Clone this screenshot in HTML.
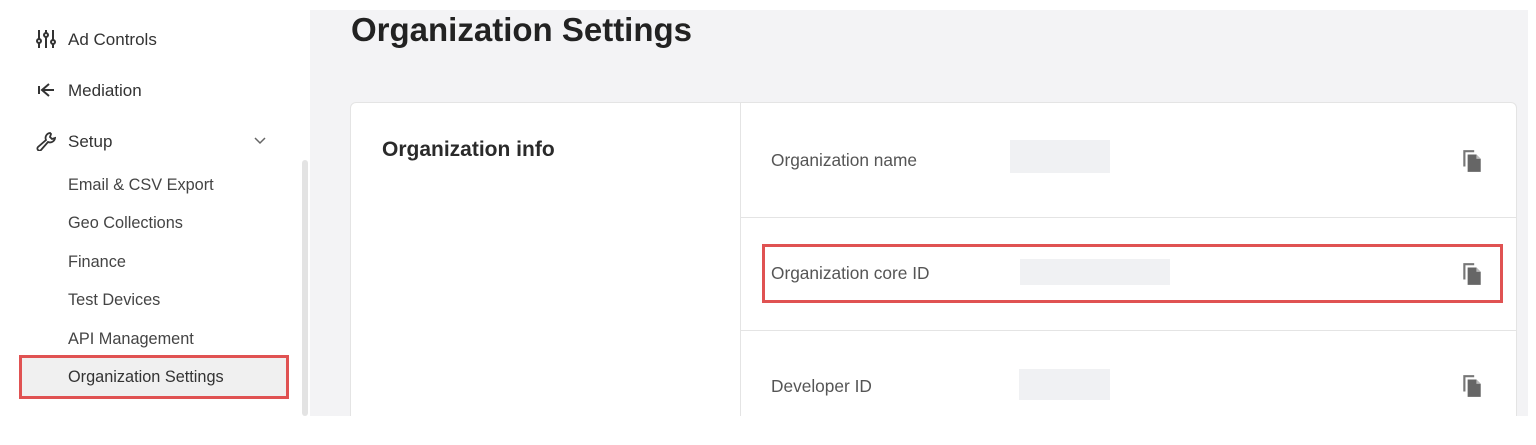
<!DOCTYPE html>
<html><head><style>
*{margin:0;padding:0;box-sizing:border-box}
body{width:1536px;height:445px;background:#fff;position:relative;overflow:hidden;font-family:"Liberation Sans",sans-serif;color:#2a2a2a}
.a{position:absolute}
.nav{font-size:17px;color:#333}
.sub{font-size:16.3px;color:#444}
.lbl{font-size:17.3px;color:#555}
.ph{background:#f0f1f3}
.cp{width:22px;height:24px}
</style></head><body>
<div class="a" style="left:310px;top:10px;width:1218px;height:406px;background:#f3f3f5"></div>
<div class="a" style="left:302px;top:160px;width:6px;height:256px;background:#e3e3e3;border-radius:3px"></div>
<svg class="a" style="left:36px;top:29px" width="20" height="20" viewBox="0 0 20 20" fill="none" stroke="#333" stroke-width="2"><path d="M3 1v18M10 1v18M17 1v18"/><circle cx="3" cy="12" r="2" fill="#fff"/><circle cx="10" cy="6" r="2" fill="#fff"/><circle cx="17" cy="13" r="2" fill="#fff"/></svg>
<div class="a nav" style="left:68px;top:30px">Ad Controls</div>
<svg class="a" style="left:37px;top:82px" width="20" height="16" viewBox="0 0 20 16" fill="none" stroke="#333" stroke-width="2"><path d="M17 8H5M12 2L5 8l7 6M2 4v8"/></svg>
<div class="a nav" style="left:68px;top:81px">Mediation</div>
<svg class="a" style="left:36px;top:131px" width="22" height="20" viewBox="0 0 22 20" fill="none" stroke="#333" stroke-width="1.8"><path d="M14 2a5 5 0 0 0-4 7L2 16a2 2 0 0 0 3 3l7-8a5 5 0 0 0 7-4l-3 1-2-2 1-3z"/></svg>
<div class="a nav" style="left:68px;top:132px">Setup</div>
<svg class="a" style="left:254px;top:137px" width="12" height="8" viewBox="0 0 12 8" fill="none" stroke="#666" stroke-width="1.5"><path d="M1 1l5 5 5-5"/></svg>
<div class="a sub" style="left:68px;top:176px">Email &amp; CSV Export</div>
<div class="a sub" style="left:68px;top:214px">Geo Collections</div>
<div class="a sub" style="left:68px;top:253px">Finance</div>
<div class="a sub" style="left:68px;top:291px">Test Devices</div>
<div class="a sub" style="left:68px;top:330px">API Management</div>
<div class="a" style="left:19px;top:355px;width:270px;height:44px;border:3px solid #e05252;background:#f0f0f0"></div>
<div class="a sub" style="left:68px;top:368px;color:#333">Organization Settings</div>
<div class="a" style="left:351px;top:11px;font-size:33px;color:#222;font-weight:bold">Organization Settings</div>
<div class="a" style="left:350px;top:102px;width:1167px;height:330px;background:#fff;border:1px solid #e4e4e4;border-radius:6px"></div>
<div class="a" style="left:740px;top:103px;width:1px;height:313px;background:#e4e4e4"></div>
<div class="a" style="left:741px;top:217px;width:775px;height:1px;background:#e4e4e4"></div>
<div class="a" style="left:741px;top:330px;width:775px;height:1px;background:#e4e4e4"></div>
<div class="a" style="left:382px;top:138px;font-size:21px;font-weight:bold;color:#2a2a2a">Organization info</div>
<div class="a lbl" style="left:771px;top:150px">Organization name</div>
<div class="a ph" style="left:1010px;top:140px;width:100px;height:33px"></div>
<div class="a lbl" style="left:771px;top:263px">Organization core ID</div>
<div class="a ph" style="left:1020px;top:259px;width:150px;height:26px"></div>
<div class="a lbl" style="left:771px;top:376px">Developer ID</div>
<div class="a ph" style="left:1019px;top:369px;width:91px;height:31px"></div>
<div class="a" style="left:762px;top:244px;width:741px;height:59px;border:3px solid #e05252"></div>
<svg class="a cp" style="left:1461px;top:149px" viewBox="0 0 20 22"><path d="M2 1h10v2H4v13H2z" fill="#777"/><path d="M6 5h8l4 4v12H6z" fill="#666"/><path d="M14 5v4h4z" fill="#bbb"/></svg>
<svg class="a cp" style="left:1461px;top:262px" viewBox="0 0 20 22"><path d="M2 1h10v2H4v13H2z" fill="#777"/><path d="M6 5h8l4 4v12H6z" fill="#666"/><path d="M14 5v4h4z" fill="#bbb"/></svg>
<svg class="a cp" style="left:1461px;top:374px" viewBox="0 0 20 22"><path d="M2 1h10v2H4v13H2z" fill="#777"/><path d="M6 5h8l4 4v12H6z" fill="#666"/><path d="M14 5v4h4z" fill="#bbb"/></svg>
<div class="a" style="left:0;top:416px;width:1536px;height:29px;background:#fff"></div>
</body></html>
